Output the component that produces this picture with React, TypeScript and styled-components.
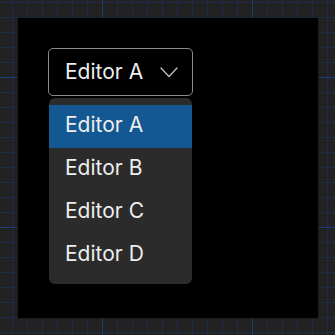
import React, { useState } from "react";
import styled, { createGlobalStyle } from "styled-components";

const GlobalStyle = createGlobalStyle`
  html, body {
    margin: 0;
    padding: 0;
    width: 335px;
    height: 335px;
    overflow: hidden;
    background-color: #222222;
    background-image:
      linear-gradient(to right, #1c3d7a 1px, transparent 1px),
      linear-gradient(to bottom, #1c3d7a 1px, transparent 1px),
      linear-gradient(to right, #1f2c48 1px, transparent 1px),
      linear-gradient(to bottom, #1f2c48 1px, transparent 1px);
    background-size: 150px 150px, 150px 150px, 15px 15px, 15px 15px;
    background-position: 102px 0, 0 77px, 12px 0, 0 2px;
    font-family: Inter, "Noto Sans", sans-serif;
  }
`;

const Stage = styled.div`
  padding: 18px;
`;

const Panel = styled.div`
  width: 300px;
  height: 300px;
  background: #000000;
  box-sizing: border-box;
  padding: 30px;
  box-shadow: 0 0 2px rgba(0, 0, 0, 0.6);
`;

const SelectWrap = styled.div`
  position: relative;
  width: 145px;
`;

const Trigger = styled.button`
  display: flex;
  align-items: center;
  justify-content: space-between;
  width: 145px;
  height: 48px;
  box-sizing: border-box;
  padding: 0 14px 0 16px;
  background: #000000;
  border: 1px solid #8a8a8a;
  border-radius: 5px;
  color: #eeeeee;
  font-family: Inter, "Noto Sans", sans-serif;
  font-size: 21px;
  line-height: 24px;
  cursor: pointer;
`;

const Chevron = styled.svg`
  width: 18px;
  height: 11px;
  margin-top: 1px;
`;

const Menu = styled.ul`
  position: absolute;
  top: 50px;
  left: 1px;
  width: 143px;
  margin: 0;
  padding: 7px 0 7px;
  list-style: none;
  background: #2b2b2b;
  border-radius: 6px;
  box-sizing: border-box;
`;

const Item = styled.li<{ $active?: boolean }>`
  height: 43px;
  box-sizing: border-box;
  display: flex;
  align-items: center;
  padding: 0 0 4px 16px;
  background: ${(p) => (p.$active ? "#135893" : "transparent")};
  color: #eeeeee;
  font-size: 21px;
  line-height: 24px;
`;

const options = ["Editor A", "Editor B", "Editor C", "Editor D"];

export default function App() {
  const [value] = useState("Editor A");
  return (
    <>
      <GlobalStyle />
      <Stage>
        <Panel>
          <SelectWrap>
            <Trigger>
              <span>{value}</span>
              <Chevron viewBox="0 0 18 11" fill="none">
                <polyline
                  points="1,1 9,9.5 17,1"
                  stroke="#c0c0c0"
                  strokeWidth="1.3"
                  strokeLinecap="round"
                  strokeLinejoin="round"
                />
              </Chevron>
            </Trigger>
            <Menu>
              {options.map((o) => (
                <Item key={o} $active={o === value}>
                  {o}
                </Item>
              ))}
            </Menu>
          </SelectWrap>
        </Panel>
      </Stage>
    </>
  );
}
